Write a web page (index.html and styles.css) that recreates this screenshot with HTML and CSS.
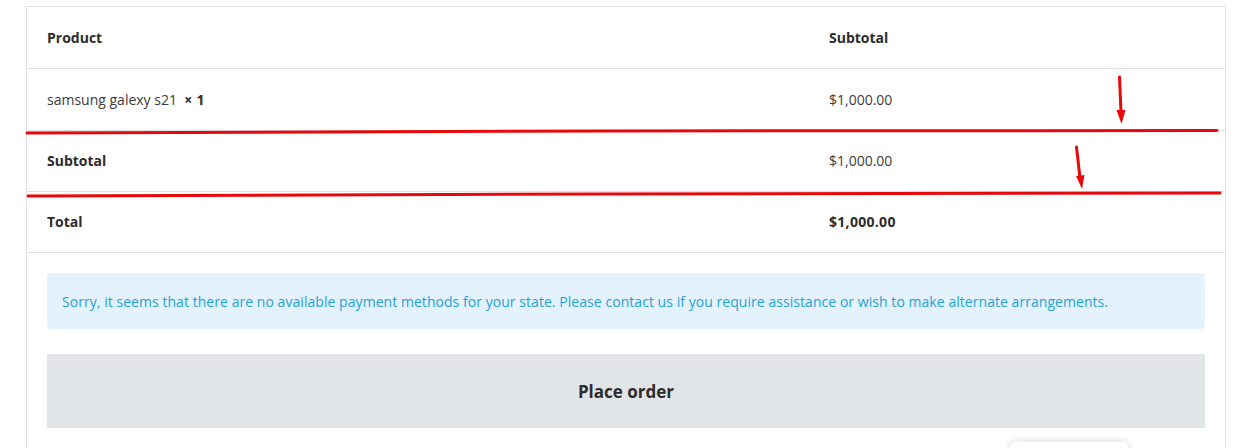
FILE: index.html
```html
<!DOCTYPE html>
<html>
<head>
<meta charset="utf-8">
<link rel="stylesheet" href="styles.css">
</head>
<body>
<div class="page">
  <div class="review">
    <table class="order-table">
      <thead>
        <tr class="tall"><th class="col-name">Product</th><th class="col-total">Subtotal</th></tr>
      </thead>
      <tbody>
        <tr class="tall"><td class="col-name">samsung galexy s21&nbsp;&nbsp;<strong class="qty">× 1</strong></td><td class="col-total">$1,000.00</td></tr>
      </tbody>
      <tfoot>
        <tr><th class="col-name">Subtotal</th><td class="col-total">$1,000.00</td></tr>
        <tr><th class="col-name">Total</th><td class="col-total"><strong>$1,000.00</strong></td></tr>
      </tfoot>
    </table>
    <div class="payment">
      <div class="notice">Sorry, it seems that there are no available payment methods for your state. Please contact us if you require assistance or wish to make alternate arrangements.</div>
      <button class="place-order">Place order</button>
      <div class="ghost"></div>
    </div>
  </div>
  <svg class="annotations" width="1239" height="448" viewBox="0 0 1239 448">
    <g stroke="#e8080c" stroke-width="3" stroke-linecap="round" fill="none">
      <path d="M27 133 L600 131 L1217 130.5"/>
      <path d="M28 196 L600 194 L1220 193"/>
      <path d="M1119.5 77 L1121 112"/>
      <path d="M1076.5 147 L1080 178"/>
    </g>
    <g fill="#e8080c">
      <path d="M1116.5 110 L1125.5 110 L1121.5 124 Z"/>
      <path d="M1076 176 L1084.5 175 L1082 189 Z"/>
    </g>
  </svg>
</div>
</body>
</html>
```
FILE: styles.css
```css
html, body {
  margin: 0;
  padding: 0;
  background: #ffffff;
}
body {
  font-family: "Open Sans", "Noto Sans", "DejaVu Sans", sans-serif;
  color: #333333;
  font-size: 14px;
}
.page {
  position: relative;
  width: 1239px;
  height: 448px;
  overflow: hidden;
  padding: 6px 0 0 26px;
  box-sizing: border-box;
}
.review {
  width: 1200px;
  border: 1px solid #e1e1e1;
  border-bottom: none;
  box-sizing: border-box;
  min-height: 460px;
}
.order-table {
  width: 100%;
  border-collapse: collapse;
  table-layout: fixed;
}
.order-table th,
.order-table td {
  height: 60px;
  padding: 0 20px;
  text-align: left;
  vertical-align: middle;
  border-bottom: 1px solid #e1e1e1;
  line-height: 20px;
}
.order-table .tall th,
.order-table .tall td {
  height: 61px;
}
.order-table th {
  font-weight: 700;
  color: #2c2c2c;
}
.order-table td {
  font-weight: 400;
  color: #3c3c3c;
}
.col-name { width: 742px; }
.order-table .qty { font-weight: 700; color: #2c2c2c; }
.order-table td strong { font-weight: 700; color: #2c2c2c; letter-spacing: 0.3px; }
.payment {
  padding: 20px 20px 0 20px;
}
.notice {
  background: #e3f2fc;
  color: #24a2d8;
  border-radius: 4px;
  height: 56px;
  padding: 0 15px;
  display: flex;
  align-items: center;
  font-size: 14px;
  letter-spacing: 0.05px;
}
.place-order {
  display: block;
  width: 100%;
  margin-top: 25px;
  height: 74px;
  border: none;
  background: #e2e5e8;
  color: #2c2c2c;
  font-family: inherit;
  font-size: 17px;
  font-weight: 700;
  padding: 0;
}
.ghost {
  margin: 14px 0 0 963px;
  width: 118px;
  height: 10px;
  border-radius: 5px;
  box-shadow: 0 0 6px 2px rgba(0,0,0,0.10);
}
.annotations {
  position: absolute;
  left: 0;
  top: 0;
  pointer-events: none;
}
```
